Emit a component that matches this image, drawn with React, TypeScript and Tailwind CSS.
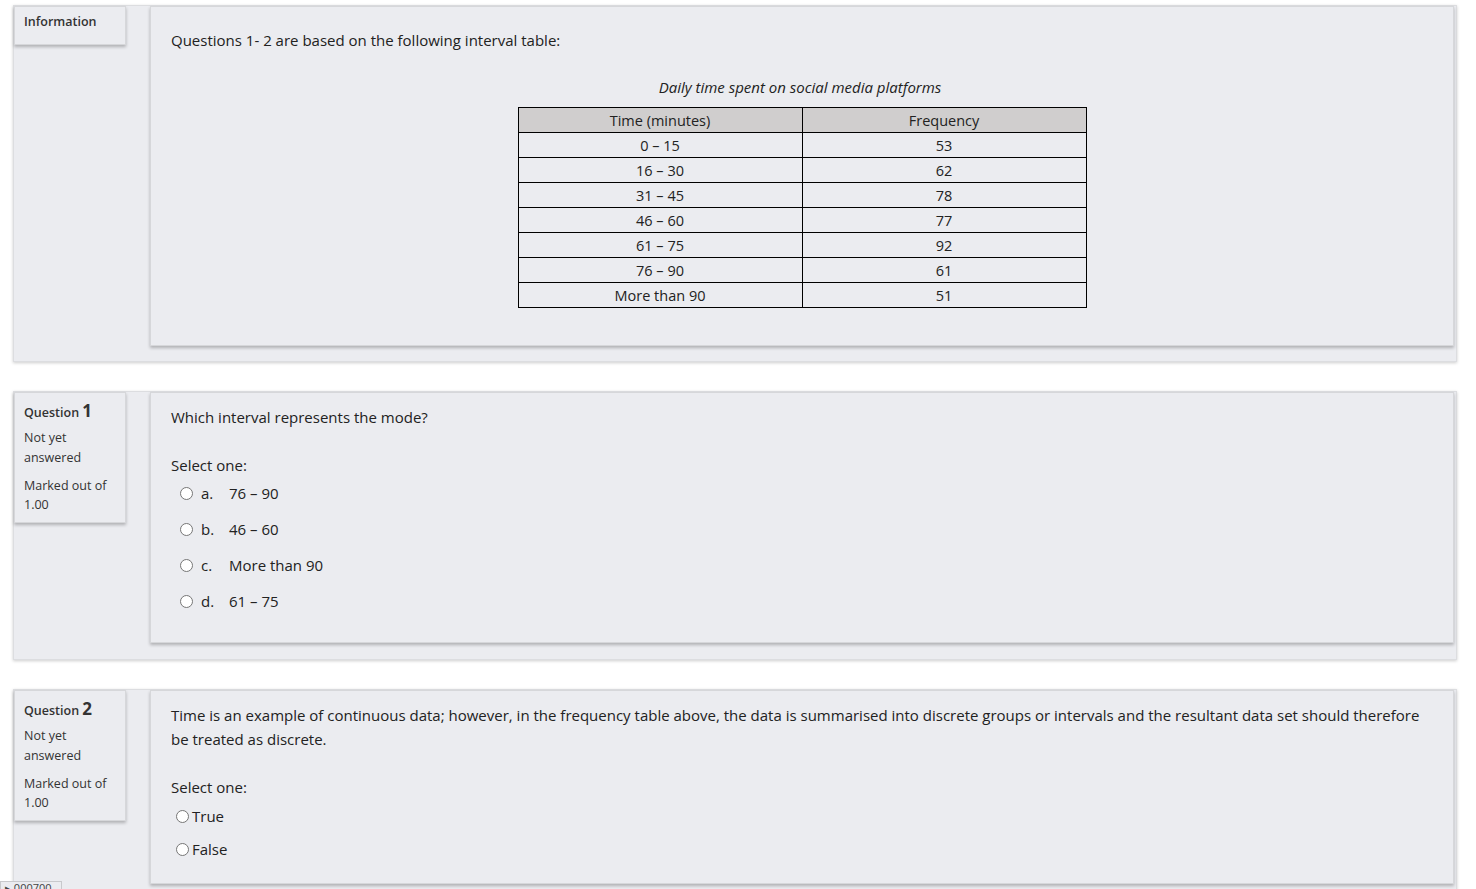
import React from "react";

const font = { fontFamily: '"Open Sans", "Noto Sans", Arial, sans-serif' };

const rows: [string, string][] = [
  ["0 – 15", "53"],
  ["16 – 30", "62"],
  ["31 – 45", "78"],
  ["46 – 60", "77"],
  ["61 – 75", "92"],
  ["76 – 90", "61"],
  ["More than 90", "51"],
];

function Radio() {
  return <span className="inline-block w-[13px] h-[13px] rounded-full border border-[#767676] bg-white shrink-0" />;
}

function Sidebar({ num, info }: { num?: number; info?: boolean }) {
  return (
    <div className="self-start w-[112px] shrink-0 bg-[#ebecf0] border border-[#d6d7da] shadow-[0_2px_3px_rgba(0,0,0,0.25)] px-[9px] pt-[5px] pb-[8px] text-[12.5px] text-[#333]">
      {info ? (
        <div className="font-semibold leading-[20px] pb-[4px]">Information</div>
      ) : (
        <>
          <div className="font-semibold leading-[26px]">
            Question <span className="text-[17px] font-bold">{num}</span>
          </div>
          <div className="leading-[20px] mt-[2px]">Not yet<br />answered</div>
          <div className="leading-[19px] mt-[8px]">Marked out of<br />1.00</div>
        </>
      )}
    </div>
  );
}

function Card({ children, sidebar, pb }: { children: React.ReactNode; sidebar: React.ReactNode; pb: string }) {
  return (
    <div className={`ml-[13px] w-[1444px] bg-[#ebecf0] border border-[#dcdde0] shadow-[0_1px_3px_rgba(0,0,0,0.2)] flex items-start gap-[24px] ${pb}`}>
      {sidebar}
      <div className="flex-1 mr-[2px] bg-[#ebecf0] border border-[#d6d7da] shadow-[0_2px_3px_rgba(0,0,0,0.25)] text-[15px] text-[#222]">
        {children}
      </div>
    </div>
  );
}

export default function App() {
  return (
    <div className="bg-white pt-[5px] relative overflow-hidden h-[889px]" style={font}>
      <Card sidebar={<Sidebar info />} pb="pb-[15px]">
        <div className="pl-[20px] pr-[20px] pt-[21px] pb-[37px]">
          <p className="leading-[24px]">Questions 1- 2 are based on the following interval table:</p>
          <p className="text-center italic leading-[24px] mt-[23px] pr-[4px]">Daily time spent on social media platforms</p>
          <table className="mx-auto mt-[8px] w-[569px] border-collapse border border-black text-center text-[14.5px]">
            <thead>
              <tr className="bg-[#d0cece] h-[25px]">
                <th className="border border-black font-normal w-1/2 leading-[23px]">Time (minutes)</th>
                <th className="border border-black font-normal leading-[23px]">Frequency</th>
              </tr>
            </thead>
            <tbody>
              {rows.map(([a, b]) => (
                <tr key={a} className="h-[25px]">
                  <td className="border border-black leading-[23px]">{a}</td>
                  <td className="border border-black leading-[23px]">{b}</td>
                </tr>
              ))}
            </tbody>
          </table>
        </div>
      </Card>

      <div className="h-[29px]" />

      <Card sidebar={<Sidebar num={1} />} pb="pb-[16px]">
        <div className="pl-[20px] pt-[12px] pb-[29px]">
          <p className="leading-[24px]">Which interval represents the mode?</p>
          <p className="leading-[24px] mt-[24px]">Select one:</p>
          <div className="flex flex-col gap-[12px] mt-[4px] pl-[9px]">
            {[["a.", "76 – 90"], ["b.", "46 – 60"], ["c.", "More than 90"], ["d.", "61 – 75"]].map(([l, v]) => (
              <div key={l} className="flex items-center h-[24px]">
                <Radio />
                <span className="ml-[8px] w-[28px]">{l}</span>
                <span>{v}</span>
              </div>
            ))}
          </div>
        </div>
      </Card>

      <div className="h-[29px]" />

      <Card sidebar={<Sidebar num={2} />} pb="pb-[16px]">
        <div className="pl-[20px] pr-[16px] pt-[12px] pb-[22px]">
          <p className="leading-[24px]">
            Time is an example of continuous data; however, in the frequency table above, the data is summarised into discrete groups or intervals and the resultant data set should therefore be treated as discrete.
          </p>
          <p className="leading-[24px] mt-[24px]">Select one:</p>
          <div className="flex flex-col gap-[9px] mt-[5px] pl-[5px]">
            {["True", "False"].map((v) => (
              <div key={v} className="flex items-center h-[24px]">
                <Radio />
                <span className="ml-[3px]">{v}</span>
              </div>
            ))}
          </div>
        </div>
      </Card>

      <div className="absolute left-0 top-[881px] w-[62px] h-[12px] bg-[#ebecf0] border border-[#c8c9cc] text-[11px] leading-[12px] text-[#444] pl-[4px] overflow-hidden">
        ▸ 000700
      </div>
    </div>
  );
}
